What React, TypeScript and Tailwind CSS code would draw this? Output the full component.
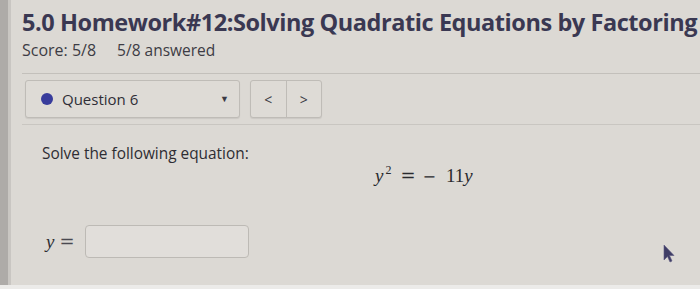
import React from "react";

export default function App() {
  return (
    <div className="w-[700px] h-[289px] overflow-hidden flex flex-col bg-[#dcd9d4]" style={{ fontFamily: '"Open Sans", "Noto Sans", sans-serif' }}>
      <div className="flex flex-1 min-h-0">
        <div className="w-[8px] shrink-0 bg-[#aeaba8]" />
        <div className="w-[3px] shrink-0 bg-[#c9c6c2]" />
        <div className="flex-1 min-w-0 flex flex-col pl-[11px] relative">
          <h1 className="mt-[6px] text-[23.5px] leading-[32px] font-bold text-[#3a3852] whitespace-nowrap tracking-[-0.43px]">
            5.0 Homework#12:Solving Quadratic Equations by Factoring
          </h1>
          <div className="mt-[2px] flex items-baseline text-[16px] leading-[20px] text-[#3d3c44]">
            <span>Score: 5/8</span>
            <span className="ml-[21px] text-[15.5px]">5/8 answered</span>
          </div>
          <div className="mt-[13px] h-[1px] bg-[#c3c0bb]" />
          <div className="mt-[6px] flex gap-[10px] pl-[3px]">
            <div className="w-[215px] h-[38px] rounded-[3px] border border-[#bfbcb7] bg-[#dedbd6] flex items-center pl-[15px] pr-[10px] shadow-[0_1px_1px_rgba(0,0,0,0.08)]">
              <span className="w-[12px] h-[12px] rounded-full bg-[#383c9c]" />
              <span className="ml-[9px] text-[15px] text-[#2f2e36]">Question 6</span>
              <span className="ml-auto text-[9px] text-[#3b3a44]">▼</span>
            </div>
            <div className="w-[72px] h-[38px] rounded-[3px] border border-[#bfbcb7] bg-[#dedbd6] flex shadow-[0_1px_1px_rgba(0,0,0,0.08)]">
              <div className="flex-1 flex items-center justify-center border-r border-[#bfbcb7] text-[14px] text-[#3b3a44]">&lt;</div>
              <div className="flex-1 flex items-center justify-center text-[14px] text-[#3b3a44]">&gt;</div>
            </div>
          </div>
          <div className="mt-[6px] h-[1px] bg-[#c9c6c1]" />
          <div className="mt-[19px] pl-[20px] text-[15.4px] leading-[20px] text-[#2e2d33]">Solve the following equation:</div>
          <div className="mt-[1px] pl-[353px] flex items-baseline leading-[22px] text-[#2a2a2e]" style={{ fontFamily: '"Liberation Serif", "DejaVu Serif", serif' }}>
            <span className="italic text-[19px]">y</span>
            <span className="ml-[2px] text-[12px] relative -top-[8px]">2</span>
            <span className="ml-[9px] text-[18px]" style={{ fontFamily: '"DejaVu Serif", serif' }}>=</span>
            <span className="ml-[7px] text-[16px]" style={{ fontFamily: '"DejaVu Serif", serif' }}>−</span>
            <span className="ml-[10px] text-[19px]">11</span>
            <span className="italic text-[19px]">y</span>
          </div>
          <div className="mt-[36px] pl-[24px] flex items-center">
            <span className="italic text-[19px] text-[#2e2d33] leading-[22px]" style={{ fontFamily: '"Liberation Serif", serif' }}>y</span>
            <span className="ml-[5px] text-[18px] text-[#4a4950] leading-[22px]" style={{ fontFamily: '"DejaVu Serif", serif' }}>=</span>
            <div className="ml-[10px] w-[164px] h-[33px] rounded-[4px] border border-[#bdbab5] bg-[#e1deda]" />
          </div>
          <svg className="absolute left-[651px] top-[244px]" width="14" height="20" viewBox="0 0 14 20">
            <path d="M2 1 L2 16 L5.5 12.5 L8 18 L10 17 L7.5 11.5 L12 11.5 Z" fill="#3f3d66" stroke="#5a5880" strokeWidth="0.6" />
          </svg>
        </div>
      </div>
      <div className="h-[4px] bg-[#ecebe9]" />
    </div>
  );
}
